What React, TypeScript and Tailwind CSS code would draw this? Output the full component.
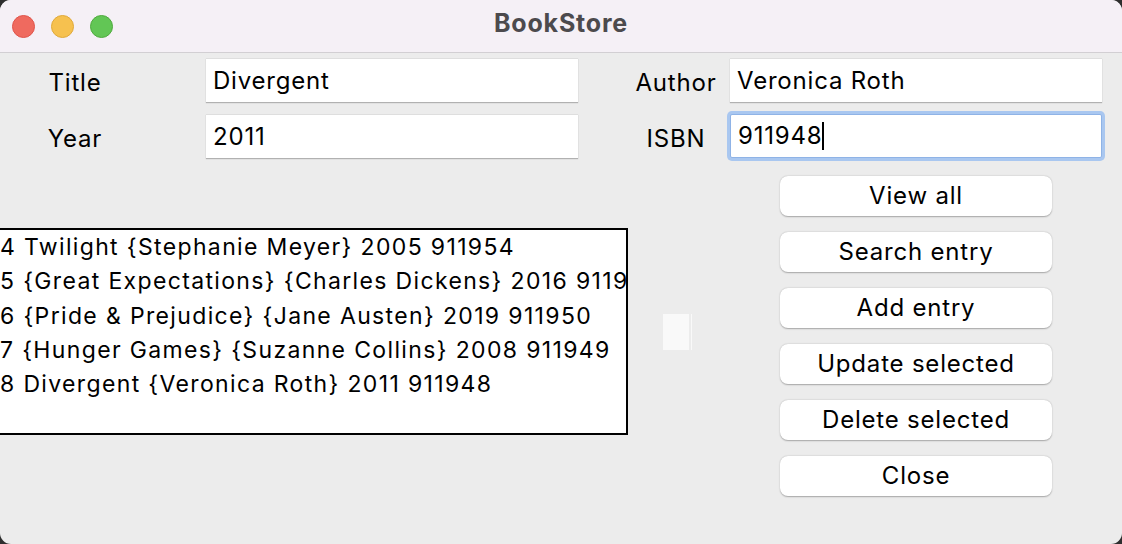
const font = { fontFamily: "Inter, 'Noto Sans', sans-serif" }

const rows = [
  "4 Twilight {Stephanie Meyer} 2005 911954",
  "5 {Great Expectations} {Charles Dickens} 2016 911952",
  "6 {Pride & Prejudice} {Jane Austen} 2019 911950",
  "7 {Hunger Games} {Suzanne Collins} 2008 911949",
  "8 Divergent {Veronica Roth} 2011 911948",
]

const buttons = ["View all", "Search entry", "Add entry", "Update selected", "Delete selected", "Close"]

function Field({ value, focused }: { value: string; focused?: boolean }) {
  return (
    <div
      className={
        "flex h-[44px] w-[372px] items-center bg-white pl-[7px] text-[24px] tracking-[0.8px] text-black " +
        (focused
          ? "rounded-[2px] border border-[#8fb3e6] ring-[3px] ring-[#a9c7f0]"
          : "border-t border-[#dedede] shadow-[0_1px_1px_rgba(0,0,0,0.25)]")
      }
    >
      <span>{value}</span>
      {focused && <span className="h-[28px] w-[2px] bg-black" />}
    </div>
  )
}

export default function App() {
  return (
    <div className="h-[544px] w-[1122px] bg-[#2e2e2e]" style={font}>
      <div className="flex h-full w-full flex-col overflow-hidden rounded-[11px] bg-[#ececec]">
        <div className="relative flex h-[53px] shrink-0 items-center gap-[16px] border-b border-[#d2cfd3] bg-[#f5f0f6] pl-[12px]">
          <span className="h-[23px] w-[23px] rounded-full border border-[#e0544b] bg-[#ef6a5f]" />
          <span className="h-[23px] w-[23px] rounded-full border border-[#e0a93a] bg-[#f6c14f]" />
          <span className="h-[23px] w-[23px] rounded-full border border-[#4faa3e] bg-[#62c655]" />
          <div className="absolute inset-0 flex items-center justify-center pb-[5px] text-[25px] font-bold tracking-[0.8px] text-[#4c4a4d]">
            BookStore
          </div>
        </div>

        <div className="pt-[5px] text-[24px] tracking-[0.8px] text-black">
          <div className="flex h-[44px] items-center">
            <div className="mt-[6px] w-[150px] text-center">Title</div>
            <div className="ml-[56px]">
              <Field value="Divergent" />
            </div>
            <div className="mt-[6px] ml-[44px] w-[108px] text-center">Author</div>
            <Field value="Veronica Roth" />
          </div>
          <div className="mt-[12px] flex h-[44px] items-center">
            <div className="mt-[6px] w-[150px] text-center">Year</div>
            <div className="ml-[56px]">
              <Field value="2011" />
            </div>
            <div className="mt-[6px] ml-[44px] w-[108px] text-center">ISBN</div>
            <Field value="911948" focused />
          </div>
        </div>

        <div className="mt-[18px] flex items-start">
          <div className="-ml-[6px] mt-[52px] h-[207px] w-[634px] overflow-hidden border-2 border-black bg-white pl-[4px]">
            {rows.map((r) => (
              <div key={r} className="whitespace-nowrap text-[23px] leading-[34.25px] tracking-[1.35px] text-black">
                {r}
              </div>
            ))}
          </div>
          <div className="ml-[35px] mt-[138px] flex h-[36px] w-[29px] gap-[2px]">
            <div className="h-full w-[26px] bg-[#f9f9f9]" />
            <div className="h-full w-[1px] bg-[#f9f9f9]" />
          </div>
          <div className="ml-[88px] flex flex-col gap-[16px]">
            {buttons.map((b) => (
              <div
                key={b}
                className="flex h-[40px] w-[272px] items-center justify-center rounded-[8px] bg-white text-[24px] tracking-[0.8px] text-black shadow-[0_0.5px_1.5px_rgba(0,0,0,0.3)]"
              >
                {b}
              </div>
            ))}
          </div>
        </div>
      </div>
    </div>
  )
}
